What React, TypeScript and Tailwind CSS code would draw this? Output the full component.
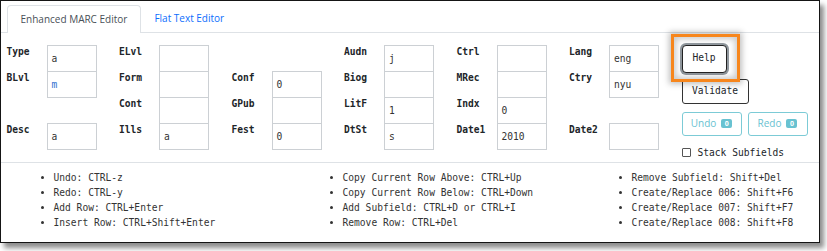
import React from "react";

type Field = { label: string; value?: string; blue?: boolean } | null;

const rows: Field[][] = [
  [{ label: "Type", value: "a" }, { label: "ELvl" }, null, { label: "Audn", value: "j" }, { label: "Ctrl" }, { label: "Lang", value: "eng" }],
  [{ label: "BLvl", value: "m", blue: true }, { label: "Form" }, { label: "Conf", value: "0" }, { label: "Biog" }, { label: "MRec" }, { label: "Ctry", value: "nyu" }],
  [null, { label: "Cont" }, { label: "GPub" }, { label: "LitF", value: "1" }, { label: "Indx", value: "0" }, null],
  [{ label: "Desc", value: "a" }, { label: "Ills", value: "a" }, { label: "Fest", value: "0" }, { label: "DtSt", value: "s" }, { label: "Date1", value: "2010" }, { label: "Date2" }],
];

const shortcuts = [
  ["Undo: CTRL-z", "Redo: CTRL-y", "Add Row: CTRL+Enter", "Insert Row: CTRL+Shift+Enter"],
  ["Copy Current Row Above: CTRL+Up", "Copy Current Row Below: CTRL+Down", "Add Subfield: CTRL+D or CTRL+I", "Remove Row: CTRL+Del"],
  ["Remove Subfield: Shift+Del", "Create/Replace 006: Shift+F6", "Create/Replace 007: Shift+F7", "Create/Replace 008: Shift+F8"],
];

const mono = "font-['DejaVu_Sans_Mono',monospace] text-[9.6px]";
const sans = "font-['Open_Sans',sans-serif]";

export default function App() {
  return (
    <div className="w-[827px] h-[251px] bg-white">
      <div className="relative w-[820px] h-[243px] bg-white border-[1.5px] border-[#151515] shadow-[4px_5px_5px_rgba(0,0,0,0.45)]">
        {/* Tabs */}
        <div className={`flex items-end h-[32px] border-b border-[#dee2e6] pl-[5.5px] text-[10px] ${sans}`}>
          <div className="h-[28px] px-[13px] -mb-px flex items-center bg-white border border-b-0 border-[#dee2e6] rounded-t-[4px] text-[#495057]">
            Enhanced MARC Editor
          </div>
          <div className="h-[28px] px-[13px] flex items-center text-[#0d6efd]">Flat Text Editor</div>
        </div>

        {/* Fixed fields */}
        <div className="flex h-[130px] pt-[11.5px] pl-[5.5px] border-b border-[#dee2e6]">
          <div className="grid grid-cols-[repeat(6,112.5px)] grid-rows-[26px_26px_26px_26px]">
            {rows.flat().map((f, i) =>
              f ? (
                <div key={i} className="flex">
                  <span className={`w-[40px] leading-[14px] font-bold text-[#212529] ${mono}`}>{f.label}</span>
                  <div
                    className={`w-[50px] h-[27px] border border-[#ccd0d4] pl-[4px] pt-[6px] leading-[14px] ${mono} ${
                      f.blue ? "text-[#2f6fd0]" : "text-[#333]"
                    }`}
                  >
                    {f.value}
                  </div>
                </div>
              ) : (
                <div key={i} />
              )
            )}
          </div>

          <div className={`flex flex-col items-start ${mono}`}>
            <button className="w-[45px] h-[28px] rounded-[4px] border border-[#222] bg-white text-[#212529] shadow-[0_0_0_2px_rgba(108,117,125,0.75)]">
              Help
            </button>
            <button className="mt-[6px] w-[67px] h-[25px] rounded-[3px] border border-[#333] bg-white text-[#212529]">
              Validate
            </button>
            <div className={`mt-[8px] flex gap-[6px] text-[10px] ${sans}`}>
              {["Undo", "Redo"].map((t) => (
                <div
                  key={t}
                  className="w-[60px] h-[24px] flex items-center justify-center gap-[5px] rounded-[3px] border border-[#7ccbd6] text-[#68c2d1]"
                >
                  {t}
                  <span className="w-[11px] h-[9px] rounded-[2px] bg-[#68c2d1] text-white text-[7px] leading-[9px] text-center font-bold">
                    0
                  </span>
                </div>
              ))}
            </div>
            <label className="mt-[11px] flex items-center gap-[7px] text-[#212529] leading-[12px]">
              <span className="w-[9px] h-[9px] border border-[#555] rounded-[1px] bg-white" />
              Stack Subfields
            </label>
          </div>
        </div>

        {/* Keyboard shortcuts */}
        <div className={`grid grid-cols-[289px_289px_1fr] pl-[52.5px] pt-[7px] text-[#333] leading-[15px] ${mono}`}>
          {shortcuts.map((col, i) => (
            <ul key={i} className="list-disc">
              {col.map((s) => (
                <li key={s}>{s}</li>
              ))}
            </ul>
          ))}
        </div>

        {/* Annotation highlight */}
        <div className="absolute left-[669.5px] top-[32.5px] w-[69px] h-[48px] border-[3px] border-[#f7861c] shadow-[0_0_6px_2px_rgba(0,0,0,0.25),inset_0_0_6px_2px_rgba(0,0,0,0.22)]" />
      </div>
    </div>
  );
}
